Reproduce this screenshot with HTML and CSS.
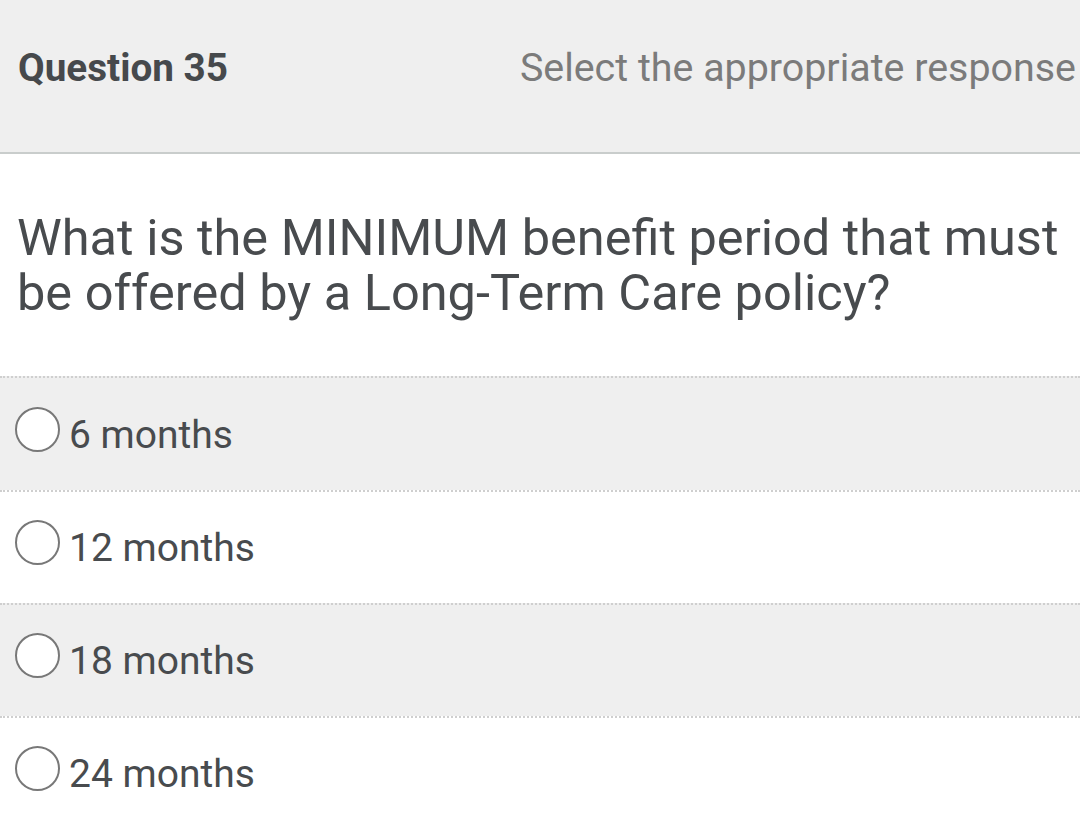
FILE: index.html
```html
<!DOCTYPE html>
<html>
<head>
<meta charset="utf-8">
<link rel="stylesheet" href="styles.css">
</head>
<body>
<div class="page">
  <header class="head">
    <span class="qnum">Question 35</span>
    <span class="hint">Select the appropriate response</span>
  </header>
  <div class="question">What is the MINIMUM benefit period that must be offered by a Long-Term Care policy?</div>
  <ul class="options">
    <li class="opt shaded first"><span class="radio"></span><span class="label">6 months</span></li>
    <li class="opt"><span class="radio"></span><span class="label">12 months</span></li>
    <li class="opt shaded"><span class="radio"></span><span class="label">18 months</span></li>
    <li class="opt"><span class="radio"></span><span class="label">24 months</span></li>
  </ul>
</div>
</body>
</html>
```

FILE: styles.css
```css
html, body {
  margin: 0;
  padding: 0;
  background: #ffffff;
}
body {
  font-family: Roboto, "Liberation Sans", sans-serif;
  color: #484b4e;
  width: 1080px;
  height: 820px;
  overflow: hidden;
}
.page {
  display: flex;
  flex-direction: column;
}
.head {
  display: flex;
  justify-content: space-between;
  align-items: flex-start;
  height: 154px;
  box-sizing: border-box;
  padding: 45px 4px 0 18px;
  background: #efefef;
  border-bottom: 2px solid #c9cdcc;
  font-size: 39.4px;
  line-height: 46px;
  white-space: nowrap;
}
.qnum {
  font-weight: 700;
  font-size: 38.7px;
  color: #46494c;
}
.hint {
  color: #7b7b7b;
}
.question {
  box-sizing: border-box;
  height: 222px;
  padding: 56px 8px 0 17px;
  font-size: 50.5px;
  line-height: 55px;
  color: #484b4e;
}
.options {
  list-style: none;
  margin: 0;
  padding: 0;
}
.opt {
  display: flex;
  align-items: flex-start;
  height: 113px;
  box-sizing: border-box;
  padding: 28px 0 0 15px;
  border-top: 2px dotted #cfcfcf;
  background: #ffffff;
}
.opt.first {
  height: 114px;
  padding-top: 29px;
}
.opt.shaded {
  background: #efefef;
}
.radio {
  width: 45px;
  height: 45px;
  box-sizing: border-box;
  border: 2.5px solid #787878;
  border-radius: 50%;
  background: #ffffff;
  flex: none;
}
.label {
  margin-left: 9px;
  margin-top: 6px;
  font-size: 39px;
  line-height: 44px;
  color: #484b4e;
}
```
